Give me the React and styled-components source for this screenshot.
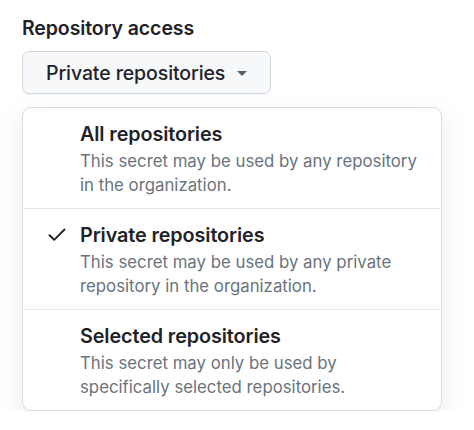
import React from 'react';
import styled, { createGlobalStyle } from 'styled-components';

const GlobalStyle = createGlobalStyle`
  body {
    margin: 0;
    background: #ffffff;
    font-family: Inter, "Noto Sans", "Liberation Sans", sans-serif;
    color: #1f2328;
  }
`;

const Page = styled.div`
  padding: 14px 0 0 22px;
`;

const Label = styled.div`
  font-size: 19.5px;
  font-weight: 600;
  line-height: 28px;
  letter-spacing: -0.1px;
`;

const SelectButton = styled.button`
  margin-top: 9px;
  display: inline-flex;
  align-items: center;
  gap: 12px;
  height: 43px;
  padding: 0 23px 0 23px;
  border: 1px solid #d0d7de;
  border-radius: 7px;
  background: #f6f8fa;
  color: #1f2328;
  font-family: inherit;
  font-size: 19.5px;
  font-weight: 500;
  letter-spacing: -0.1px;
  box-shadow: 0 1px 0 rgba(31, 35, 40, 0.04);
`;

const Caret = styled.span`
  width: 0;
  height: 0;
  border-left: 5.5px solid transparent;
  border-right: 5.5px solid transparent;
  border-top: 5.5px solid #57606a;
  margin-top: 2px;
`;

const Menu = styled.div`
  margin-top: 13px;
  width: 418px;
  border: 1px solid #d8dee4;
  border-radius: 9px;
  background: #ffffff;
  box-shadow: 0 8px 24px rgba(140, 149, 159, 0.2);
  overflow: hidden;
`;

const Item = styled.div`
  display: grid;
  grid-template-columns: 57px 1fr;
  padding: 13px 16px 11px 0;
  border-top: ${p => (p.$first ? 'none' : '1px solid #e4e8ec')};
`;

const CheckCell = styled.div`
  display: flex;
  justify-content: flex-end;
  padding-right: 14px;
  padding-top: 6px;
`;

const Title = styled.div`
  font-size: 19.8px;
  font-weight: 600;
  line-height: 26px;
  letter-spacing: -0.1px;
`;

const Desc = styled.div`
  font-size: 16.8px;
  line-height: 24px;
  color: #6a737d;
  margin-top: 2px;
`;

const Check = () => (
  <svg width="18" height="14" viewBox="0 0 18 14" fill="none">
    <path
      d="M1.5 7.2 L6.2 11.8 L16.5 1.5"
      stroke="#1f2328"
      strokeWidth="1.9"
      strokeLinecap="round"
      strokeLinejoin="round"
    />
  </svg>
);

const options = [
  {
    title: 'All repositories',
    lines: ['This secret may be used by any repository', 'in the organization.'],
  },
  {
    title: 'Private repositories',
    lines: ['This secret may be used by any private', 'repository in the organization.'],
    selected: true,
  },
  {
    title: 'Selected repositories',
    lines: ['This secret may only be used by', 'specifically selected repositories.'],
  },
];

export default function App() {
  return (
    <Page>
      <GlobalStyle />
      <Label>Repository access</Label>
      <SelectButton>
        Private repositories
        <Caret />
      </SelectButton>
      <Menu>
        {options.map((o, i) => (
          <Item key={o.title} $first={i === 0}>
            <CheckCell>{o.selected && <Check />}</CheckCell>
            <div>
              <Title>{o.title}</Title>
              <Desc>
                {o.lines[0]}
                <br />
                {o.lines[1]}
              </Desc>
            </div>
          </Item>
        ))}
      </Menu>
    </Page>
  );
}
